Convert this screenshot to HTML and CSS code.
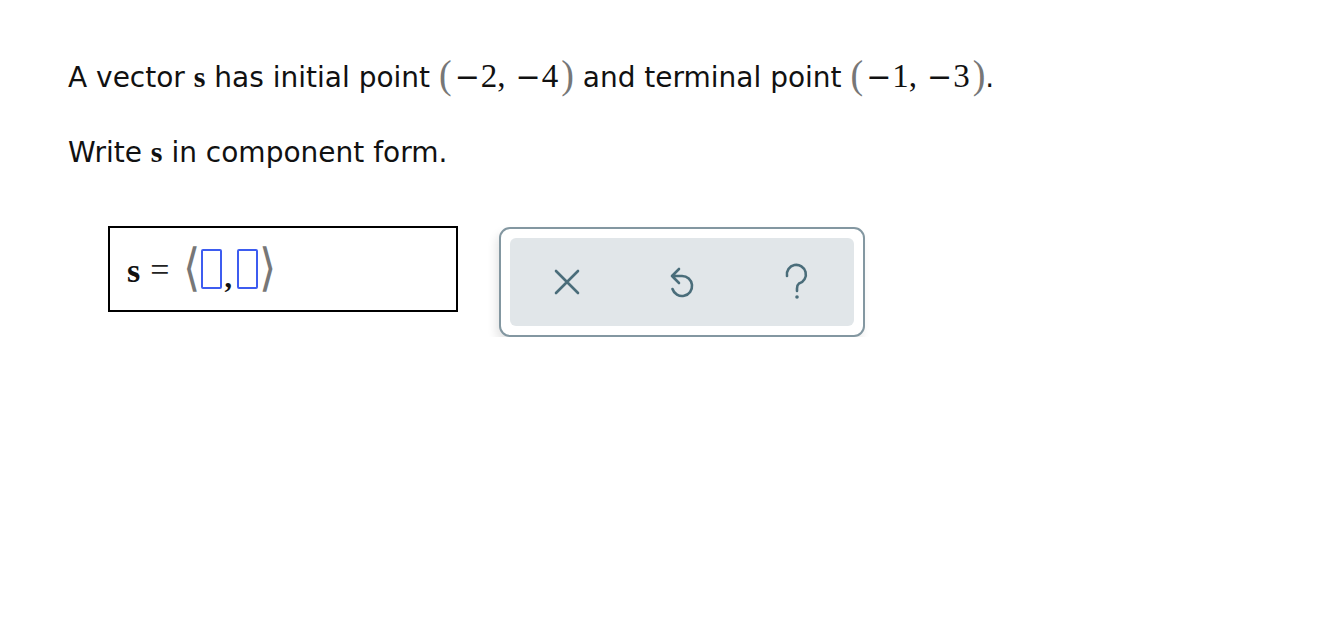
FILE: index.html
```html
<!DOCTYPE html>
<html>
<head>
<meta charset="utf-8">
<link rel="stylesheet" href="styles.css">
</head>
<body>
<div class="main">
  <p class="line">A vector <b class="mv">s</b> has initial point <span class="math"><span class="paren po">(</span><span class="neg">−</span>2<span class="comma-m">,</span><span class="neg">−</span>4<span class="paren pc">)</span></span> and terminal point <span class="math"><span class="paren po">(</span><span class="neg">−</span>1<span class="comma-m">,</span><span class="neg">−</span>3<span class="paren pc">)</span></span>.</p>
  <p class="line second">Write <b class="mv">s</b> in component form.</p>
  <div class="answer">
    <div class="inputbox">
      <b class="mv big">s</b><span class="eq">=</span><span class="angle">⟨</span><span class="slot"></span><span class="comma">,</span><span class="slot"></span><span class="angle">⟩</span>
    </div>
    <div class="panel">
      <div class="tools">
        <div class="tool">
          <svg width="30" height="30" viewBox="0 0 30 30"><path d="M4 4 L26 26 M26 4 L4 26" stroke="#4a6d7a" stroke-width="2.6" stroke-linecap="round" fill="none"/></svg>
        </div>
        <div class="tool">
          <svg width="34" height="34" viewBox="0 0 34 34"><path d="M14 4 L7 11 L14 18 M7 11 H17 A10 10 0 1 1 7.5 24" stroke="#4a6d7a" stroke-width="2.6" stroke-linecap="round" stroke-linejoin="round" fill="none"/></svg>
        </div>
        <div class="tool">
          <svg width="30" height="40" viewBox="0 0 30 40"><path d="M5 14 A9.5 9.5 0 1 1 17 21.5 Q15 23 15 26.5 V29" stroke="#4a6d7a" stroke-width="2.6" stroke-linecap="round" fill="none"/><circle cx="15" cy="35" r="1.8" fill="#4a6d7a"/></svg>
        </div>
      </div>
    </div>
  </div>
</div>
</body>
</html>
```

FILE: styles.css
```css
html, body {
  margin: 0;
  padding: 0;
  background: #fff;
}
.main {
  padding: 60px 0 0 68px;
  font-family: "DejaVu Sans", Verdana, sans-serif;
  font-size: 28px;
  color: #111;
}
.line {
  margin: 0;
  line-height: 36px;
  height: 36px;
  white-space: nowrap;
}
.second {
  margin-top: 39px;
}
.mv {
  font-family: "Liberation Serif", "Times New Roman", serif;
  font-weight: bold;
  font-size: 30px;
  line-height: 20px;
}
.math {
  font-family: "Liberation Serif", "Times New Roman", serif;
  font-size: 33px;
  line-height: 20px;
}
.paren {
  color: #777;
  font-size: 38px;
  display: inline-block;
  line-height: 20px;
  transform: scaleY(1.05);
}
.po {
  margin-right: 3px;
}
.pc {
  margin-left: 3px;
}
.neg {
  font-family: "DejaVu Serif", "Liberation Serif", serif;
  font-size: 30px;
  margin: 0 1px 0 0;
}
.comma-m {
  margin-right: 10px;
}
.answer {
  display: flex;
  align-items: flex-start;
  margin-top: 55px;
  margin-left: 40px;
}
.inputbox {
  box-sizing: border-box;
  width: 350px;
  height: 86px;
  border: 2px solid #000;
  display: flex;
  align-items: center;
  padding: 0 0 0 17px;
  font-family: "Liberation Serif", "Times New Roman", serif;
}
.big {
  font-size: 34px;
  line-height: 1;
  margin-top: 4px;
}
.eq {
  font-size: 34px;
  line-height: 1;
  margin: 2px 14px 0 10px;
  color: #222;
}
.angle {
  font-size: 44px;
  line-height: 1;
  color: #777;
  transform: scaleY(1.15);
  display: inline-block;
}
.slot {
  box-sizing: border-box;
  width: 21px;
  height: 40px;
  border: 2px solid #3d5cf0;
  border-radius: 2px;
  margin: 0 1px;
}
.comma {
  font-size: 30px;
  line-height: 1;
  font-weight: bold;
  align-self: flex-end;
  margin: 0 4px 18px 1px;
}
.panel {
  box-sizing: border-box;
  margin-left: 41px;
  margin-top: 1px;
  width: 366px;
  height: 110px;
  border: 2px solid #8397a1;
  border-radius: 11px;
  padding: 9px;
  background: #fff;
  box-shadow: -3px 6px 10px rgba(0, 0, 0, 0.10);
}
.tools {
  height: 100%;
  background: #e1e6e9;
  border-radius: 6px;
  display: grid;
  grid-template-columns: 1fr 1fr 1fr;
  align-items: center;
  justify-items: center;
}
.tool {
  display: flex;
  align-items: center;
  justify-content: center;
}
.tool svg {
  display: block;
}
```
